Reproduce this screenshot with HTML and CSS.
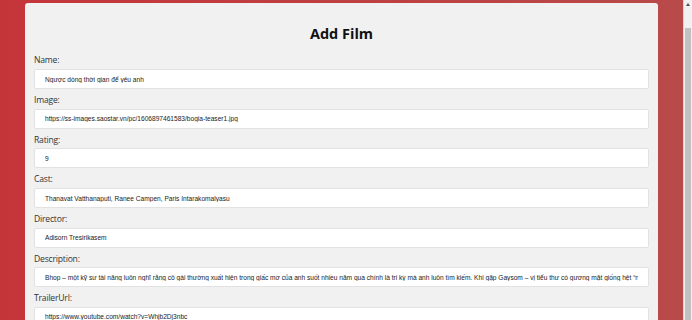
FILE: index.html
```html
<!DOCTYPE html>
<html lang="vi">
<head>
    <meta charset="UTF-8">
    <meta name="viewport" content="width=device-width, initial-scale=1.0">
    <title>Add Film</title>
    <link rel="stylesheet" href="styles.css">
</head>
<body>
    <main class="page">
        <section class="card">
            <h1 class="card-title">Add Film</h1>
            <form class="film-form" id="film-form">
                <label class="field-label" for="name">Name:</label>
                <input class="field-input" type="text" id="name" value="Ngược dòng thời gian để yêu anh">
                <label class="field-label" for="image">Image:</label>
                <input class="field-input" type="text" id="image" value="https://ss-images.saostar.vn/pc/1606897461583/bogia-teaser1.jpg">
                <label class="field-label" for="rating">Rating:</label>
                <input class="field-input" type="text" id="rating" value="9">
                <label class="field-label" for="cast">Cast:</label>
                <input class="field-input" type="text" id="cast" value="Thanavat Vatthanaputi, Ranee Campen, Paris Intarakomalyasu">
                <label class="field-label" for="director">Director:</label>
                <input class="field-input" type="text" id="director" value="Adisorn Tresirikasem">
                <label class="field-label" for="description">Description:</label>
                <input class="field-input" type="text" id="description" value="Bhop – một kỹ sư tài năng luôn nghĩ rằng cô gái thường xuất hiện trong giấc mơ của anh suốt nhiều năm qua chính là tri kỷ mà anh luôn tìm kiếm. Khi gặp Gaysom – vị tiểu thư có gương mặt giống hệt “người trong mộng”, anh quyết tâm chinh phục cô.">
                <label class="field-label" for="trailer">TrailerUrl:</label>
                <input class="field-input" type="text" id="trailer" value="https://www.youtube.com/watch?v=Whjb2Dj3nbc">
            </form>
        </section>
    </main>
    <!-- window scrollbar, page is scrolled a little -->
    <div class="scrollbar">
        <div class="scroll-arrow"></div>
        <div class="scroll-thumb"></div>
    </div>
</body>
</html>
```

FILE: styles.css
```css
* {
    margin: 0;
    padding: 0;
    box-sizing: border-box;
}
body {
    display: flex;
    height: 100vh;
    overflow: hidden;
    font-family: "Open Sans", Arial, sans-serif;
}
.page {
    flex: 1;
    background: linear-gradient(to right, #c4353a, #b94a4a);
    padding: 3px 25px 0 25px;
    overflow: hidden;
}
.card {
    background-color: #f1f1f1;
    border-radius: 3px 3px 0 0;
    padding: 0 9px 20px 9px;
    height: 600px;
}
.card-title {
    text-align: center;
    font-size: 14.5px;
    font-weight: 700;
    line-height: 22px;
    padding: 20px 0 4.4px 0;
    color: #111;
}
.film-form {
    display: flex;
    flex-direction: column;
}
.field-label {
    display: block;
    font-size: 8.6px;
    letter-spacing: -0.2px;
    line-height: 14px;
    height: 19.67px;
    padding-top: 4px;
    color: #333;
}
.field-input {
    height: 20px;
    padding: 0 10px;
    border: 1px solid #e2e2e2;
    border-radius: 2px;
    background-color: #fff;
    font-family: "Liberation Sans", Arial, sans-serif;
    font-size: 6.6px;
    color: #222;
    outline: none;
}
.scrollbar {
    width: 9px;
    background-color: #f1f1f1;
    border-left: 1px solid #e6d0d0;
    display: flex;
    flex-direction: column;
    align-items: center;
}
.scroll-arrow {
    margin-top: 3px;
    width: 0;
    height: 0;
    border-left: 2.5px solid transparent;
    border-right: 2.5px solid transparent;
    border-bottom: 3px solid #505050;
}
.scroll-thumb {
    margin-top: 22px;
    width: 6px;
    flex: 1;
    background-color: #c1c1c1;
}
```
